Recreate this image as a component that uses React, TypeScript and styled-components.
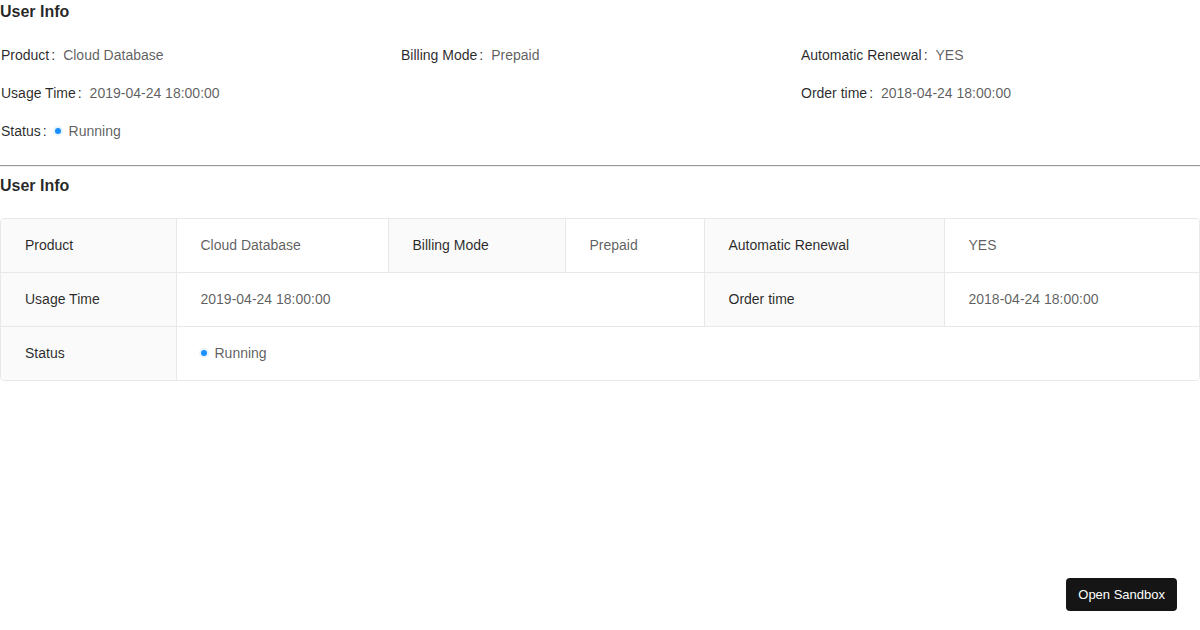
import React from 'react'
import styled, { createGlobalStyle } from 'styled-components'

const GlobalStyle = createGlobalStyle`
  html, body {
    margin: 0;
    padding: 0;
    background: #fff;
  }
  body {
    font-family: "Liberation Sans", Arial, sans-serif;
    font-size: 14px;
    line-height: 1.5;
    color: rgba(0, 0, 0, 0.65);
  }
`

const Page = styled.div`
  width: 1200px;
`

const Title = styled.div`
  margin-bottom: 20px;
  color: rgba(0, 0, 0, 0.85);
  font-weight: bold;
  font-size: 16px;
  line-height: 24px;
`

const PlainGrid = styled.div`
  display: grid;
  grid-template-columns: repeat(3, 400px);
`

const PlainItem = styled.div<{ $span?: number }>`
  grid-column: span ${(p) => p.$span ?? 1};
  height: 22px;
  padding-bottom: 16px;
  padding-left: 1px;
  font-size: 14px;
  line-height: 22px;
  white-space: nowrap;
`

const PlainLabel = styled.span`
  color: rgba(0, 0, 0, 0.85);
  &::after {
    content: ':';
    position: relative;
    top: -0.5px;
    margin: 0 8px 0 2px;
  }
`

const PlainValue = styled.span`
  color: rgba(0, 0, 0, 0.65);
`

const Divider = styled.div`
  margin-top: 7px;
  margin-bottom: 7px;
  border-top: 1px solid #9a9a9a;
  border-bottom: 1px solid #eeeeee;
  height: 0;
`

const TableFrame = styled.div`
  border: 1px solid #e8e8e8;
  border-radius: 4px;
  overflow: hidden;
`

const Table = styled.table`
  width: 100%;
  table-layout: fixed;
  border-collapse: collapse;
`

const Row = styled.tr`
  border-bottom: 1px solid #e8e8e8;
  &:last-child {
    border-bottom: none;
  }
`

const Cell = styled.td<{ $label?: boolean }>`
  height: 21px;
  padding: 16px 24px;
  font-size: 14px;
  line-height: 21px;
  text-align: left;
  white-space: nowrap;
  border-right: 1px solid #e8e8e8;
  background: ${(p) => (p.$label ? '#fafafa' : '#fff')};
  color: ${(p) => (p.$label ? 'rgba(0, 0, 0, 0.85)' : 'rgba(0, 0, 0, 0.65)')};
  &:last-child {
    border-right: none;
  }
`

const Status = styled.span`
  line-height: inherit;
`

const Dot = styled.span`
  display: inline-block;
  width: 6px;
  height: 6px;
  border-radius: 50%;
  background: #1890ff;
  box-shadow: 0 0 0 2px rgba(24, 144, 255, 0.1);
  margin-right: 8px;
  vertical-align: middle;
  position: relative;
  top: -1px;
`

const SandboxButton = styled.button`
  position: fixed;
  right: 23px;
  bottom: 19px;
  height: 33px;
  padding: 0 12px;
  border: none;
  border-radius: 4px;
  background: #151515;
  color: #fff;
  font-family: "Liberation Sans", Arial, sans-serif;
  font-size: 13px;
  cursor: pointer;
`

const colWidths = [175, 212, 177, 139, 240, 255]

const Running = () => (
  <Status>
    <Dot />
    Running
  </Status>
)

export default function App() {
  return (
    <Page>
      <GlobalStyle />
      <Title>User Info</Title>
      <PlainGrid>
        <PlainItem>
          <PlainLabel>Product</PlainLabel>
          <PlainValue>Cloud Database</PlainValue>
        </PlainItem>
        <PlainItem>
          <PlainLabel>Billing Mode</PlainLabel>
          <PlainValue>Prepaid</PlainValue>
        </PlainItem>
        <PlainItem>
          <PlainLabel>Automatic Renewal</PlainLabel>
          <PlainValue>YES</PlainValue>
        </PlainItem>
        <PlainItem $span={2}>
          <PlainLabel>Usage Time</PlainLabel>
          <PlainValue>2019-04-24 18:00:00</PlainValue>
        </PlainItem>
        <PlainItem>
          <PlainLabel>Order time</PlainLabel>
          <PlainValue>2018-04-24 18:00:00</PlainValue>
        </PlainItem>
        <PlainItem $span={3}>
          <PlainLabel>Status</PlainLabel>
          <PlainValue>
            <Running />
          </PlainValue>
        </PlainItem>
      </PlainGrid>

      <Divider />

      <Title>User Info</Title>
      <TableFrame>
        <Table>
          <colgroup>
            {colWidths.map((w, i) => (
              <col key={i} style={{ width: w }} />
            ))}
          </colgroup>
          <tbody>
            <Row>
              <Cell $label>Product</Cell>
              <Cell>Cloud Database</Cell>
              <Cell $label>Billing Mode</Cell>
              <Cell>Prepaid</Cell>
              <Cell $label>Automatic Renewal</Cell>
              <Cell>YES</Cell>
            </Row>
            <Row>
              <Cell $label>Usage Time</Cell>
              <Cell colSpan={3}>2019-04-24 18:00:00</Cell>
              <Cell $label>Order time</Cell>
              <Cell>2018-04-24 18:00:00</Cell>
            </Row>
            <Row>
              <Cell $label>Status</Cell>
              <Cell colSpan={5}>
                <Running />
              </Cell>
            </Row>
          </tbody>
        </Table>
      </TableFrame>

      <SandboxButton>Open Sandbox</SandboxButton>
    </Page>
  )
}
